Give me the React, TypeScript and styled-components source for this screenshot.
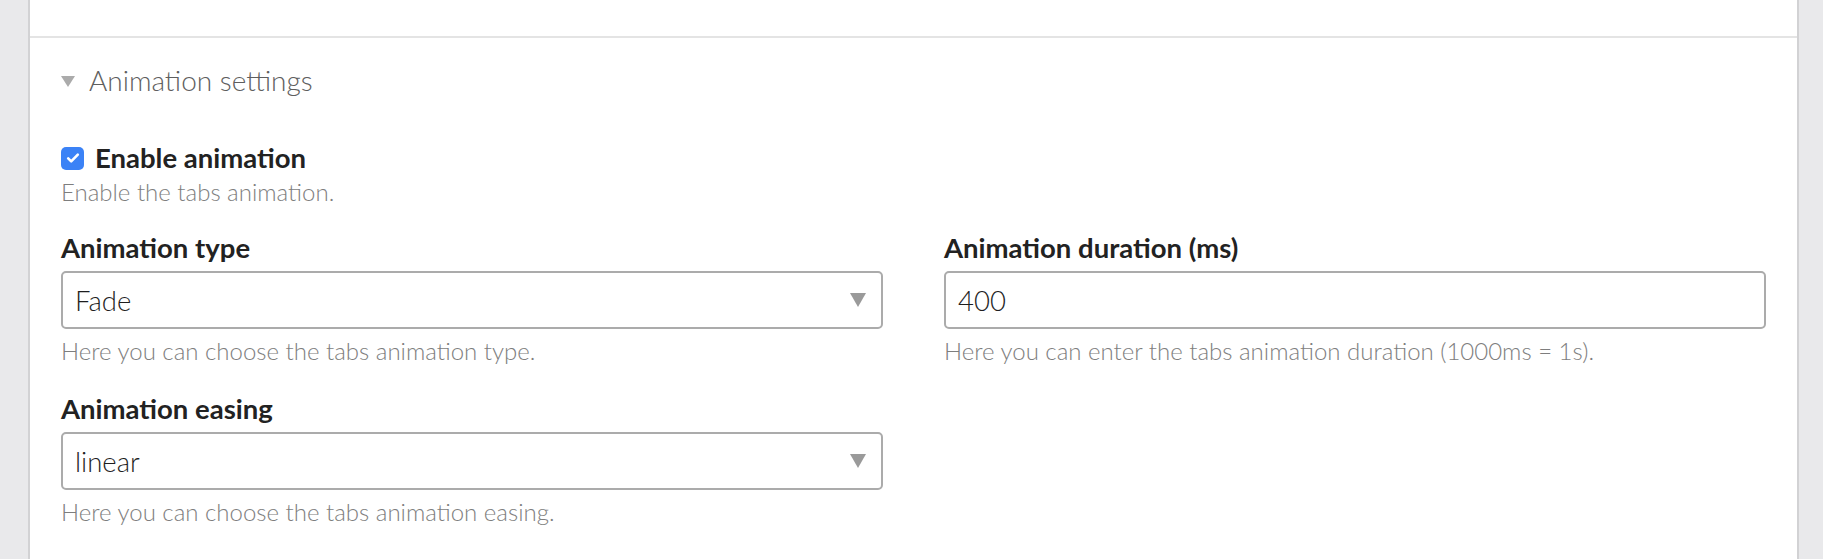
import { useState } from 'react';
import styled, { createGlobalStyle } from 'styled-components';

const GlobalStyle = createGlobalStyle`
  html, body {
    margin: 0;
    padding: 0;
    background: #e9e9eb;
    font-family: Lato, "Open Sans", sans-serif;
  }
`;

const Page = styled.div`
  padding: 0 24px 0 28px;
  min-height: 559px;
  box-sizing: border-box;
`;

const Panel = styled.div`
  background: #fff;
  border-left: 2px solid #d2d2d4;
  border-right: 2px solid #d2d2d4;
  min-height: 559px;
  box-sizing: border-box;
`;

// the (collapsed) section that sits above this one
const PrevSection = styled.div`
  height: 36px;
  border-bottom: 2px solid #e4e4e4;
`;

const Section = styled.section`
  padding: 26px 31px 40px 31px;
`;

const SectionHeader = styled.button`
  display: flex;
  align-items: center;
  gap: 14px;
  border: 0;
  background: none;
  padding: 0;
  font-family: inherit;
  font-size: 28px;
  font-weight: 300;
  line-height: 32px;
  color: #5e5e5e;
  cursor: pointer;
`;

const Caret = styled.span`
  width: 0;
  height: 0;
  border-left: 7px solid transparent;
  border-right: 7px solid transparent;
  border-top: 11px solid #ababab;
  margin-top: 2px;
`;

const CheckRow = styled.label`
  display: flex;
  align-items: center;
  gap: 11px;
  margin-top: 46px;
  font-size: 27.5px;
  line-height: 32px;
  font-weight: 700;
  color: #222;
  cursor: pointer;
`;

const CheckBox = styled.span<{ $on: boolean }>`
  width: 23px;
  height: 23px;
  border-radius: 5px;
  box-sizing: border-box;
  display: flex;
  align-items: center;
  justify-content: center;
  background: ${p => (p.$on ? '#3b82f6' : '#fff')};
  border: ${p => (p.$on ? 'none' : '2px solid #767676')};
`;

const Help = styled.div<{ $top?: number }>`
  margin-top: ${p => p.$top ?? 8}px;
  font-size: 24px;
  font-weight: 300;
  line-height: 28px;
  color: #7e7e7e;
`;

const Grid = styled.div`
  display: grid;
  grid-template-columns: 1fr 1fr;
  column-gap: 61px;
  row-gap: 28px;
  margin-top: 26px;
`;

const Field = styled.div`
  display: flex;
  flex-direction: column;
`;

const Label = styled.div`
  font-size: 27.5px;
  line-height: 32px;
  font-weight: 700;
  color: #222;
  margin-bottom: 7px;
`;

const Box = styled.div`
  position: relative;
  height: 58px;
  box-sizing: border-box;
  border: 2px solid #ababab;
  border-radius: 5px;
  display: flex;
  align-items: center;
  padding: 0 12px;
  font-size: 27.5px;
  font-weight: 300;
  color: #1e1e1e;
`;

const SelectArrow = styled.span`
  position: absolute;
  right: 15px;
  top: 20px;
  width: 0;
  height: 0;
  border-left: 8.5px solid transparent;
  border-right: 8.5px solid transparent;
  border-top: 14px solid #9a9a9a;
`;

function Select({ value }: { value: string }) {
  return (
    <Box>
      {value}
      <SelectArrow />
    </Box>
  );
}

export default function App() {
  const [enabled, setEnabled] = useState(true);

  return (
    <>
      <GlobalStyle />
      <Page>
        <Panel>
          <PrevSection />
          <Section>
            <SectionHeader>
              <Caret />
              Animation settings
            </SectionHeader>

            <CheckRow onClick={() => setEnabled(!enabled)}>
              <CheckBox $on={enabled}>
                {enabled && (
                  <svg width="16" height="16" viewBox="0 0 16 16">
                    <path d="M3.2 8.4l3 3L12.8 4.6" fill="none" stroke="#fff" strokeWidth="2.6" strokeLinecap="round" strokeLinejoin="round" />
                  </svg>
                )}
              </CheckBox>
              Enable animation
            </CheckRow>
            <Help $top={4}>Enable the tabs animation.</Help>

            <Grid>
              <Field>
                <Label>Animation type</Label>
                <Select value="Fade" />
                <Help>Here you can choose the tabs animation type.</Help>
              </Field>
              <Field>
                <Label>Animation duration (ms)</Label>
                <Box>400</Box>
                <Help>Here you can enter the tabs animation duration (1000ms = 1s).</Help>
              </Field>
              <Field>
                <Label>Animation easing</Label>
                <Select value="linear" />
                <Help>Here you can choose the tabs animation easing.</Help>
              </Field>
            </Grid>
          </Section>
        </Panel>
      </Page>
    </>
  );
}
